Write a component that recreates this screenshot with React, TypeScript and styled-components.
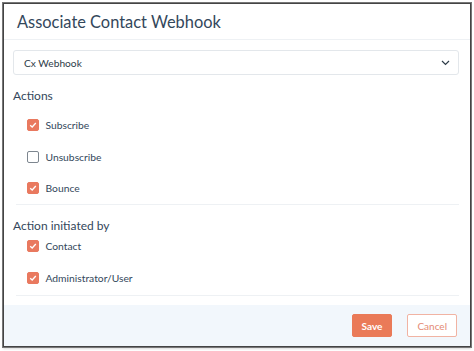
import React from "react";
import styled, { createGlobalStyle } from "styled-components";

const GlobalStyle = createGlobalStyle`
  html, body {
    margin: 0;
    padding: 0;
    background: #ffffff;
    font-family: Lato, "Open Sans", sans-serif;
  }
`;

const Page = styled.div`
  width: 474px;
  height: 351px;
  padding: 3px 3px 4px 3px;
  box-sizing: border-box;
`;

const Modal = styled.div`
  height: 100%;
  display: flex;
  flex-direction: column;
  border: 1px solid #444;
  outline: 0.5px solid #777;
  box-sizing: border-box;
  background: #ffffff;
  box-shadow: 0 2px 2px rgba(0, 0, 0, 0.15);
`;

const Header = styled.div`
  height: 36px;
  box-sizing: border-box;
  flex-shrink: 0;
  display: flex;
  align-items: center;
  padding: 0 13px 1px;
  border-bottom: 1px solid #eef1f4;
`;

const Title = styled.h2`
  margin: 0;
  font-size: 16.4px;
  font-weight: 400;
  color: #33475b;
`;

const Body = styled.div`
  flex: 1;
  padding: 10px 11px 0 9px;
  display: flex;
  flex-direction: column;
`;

const Select = styled.div`
  height: 25px;
  box-sizing: border-box;
  border: 1px solid #e3e7eb;
  border-radius: 3px;
  display: flex;
  align-items: center;
  justify-content: space-between;
  padding: 0 8px 0 10px;
  font-size: 10.2px;
  color: #2d3b48;
`;

const SectionTitle = styled.div`
  font-size: 12px;
  line-height: 16px;
  color: #33475b;
  margin-top: 13px;
`;

const Group = styled.div<{ $top: number; $bottom: number }>`
  display: flex;
  flex-direction: column;
  gap: 19.5px;
  padding: ${({ $top, $bottom }) => `${$top}px 0 ${$bottom}px 10.5px`};
  margin-left: 3px;
  border-bottom: 1px solid #eef1f4;
`;

const Row = styled.label`
  display: flex;
  align-items: center;
  gap: 7px;
  font-size: 10.3px;
  color: #33475b;
  height: 12px;
`;

const Box = styled.span<{ $checked: boolean }>`
  width: 12px;
  height: 12px;
  box-sizing: border-box;
  border-radius: 2px;
  display: flex;
  align-items: center;
  justify-content: center;
  background: ${({ $checked }) => ($checked ? "#e9795f" : "#ffffff")};
  border: 1px solid ${({ $checked }) => ($checked ? "#e9795f" : "#7d868f")};
`;

const Footer = styled.div`
  height: 41px;
  flex-shrink: 0;
  background: #f2f7fc;
  display: flex;
  align-items: center;
  justify-content: flex-end;
  gap: 15px;
  padding: 0 13px 0 0;
`;

const Button = styled.button<{ $primary?: boolean }>`
  height: 23px;
  padding: 0 9px;
  border-radius: 2px;
  font-family: inherit;
  font-size: 10px;
  font-weight: ${({ $primary }) => ($primary ? 700 : 400)};
  background: ${({ $primary }) => ($primary ? "#ea7a58" : "#ffffff")};
  color: ${({ $primary }) => ($primary ? "#ffffff" : "#e48a74")};
  border: 1px solid ${({ $primary }) => ($primary ? "#ea7a58" : "#f1b3a3")};
`;

const Check = () => (
  <svg width="8" height="8" viewBox="0 0 8 8">
    <path d="M1.2 4.2 L3.2 6 L6.8 2" fill="none" stroke="#fff" strokeWidth="1.3" />
  </svg>
);

const Checkbox = ({ label, checked }: { label: string; checked: boolean }) => (
  <Row>
    <Box $checked={checked}>{checked && <Check />}</Box>
    {label}
  </Row>
);

export default function App() {
  return (
    <>
      <GlobalStyle />
      <Page>
        <Modal>
          <Header>
            <Title>Associate Contact Webhook</Title>
          </Header>
          <Body>
            <Select>
              <span>Cx Webhook</span>
              <svg width="9" height="6" viewBox="0 0 9 6">
                <path d="M1 1 L4.5 4.5 L8 1" fill="none" stroke="#2d3b48" strokeWidth="1.2" />
              </svg>
            </Select>
            <SectionTitle>Actions</SectionTitle>
            <Group $top={15} $bottom={10}>
              <Checkbox label="Subscribe" checked />
              <Checkbox label="Unsubscribe" checked={false} />
              <Checkbox label="Bounce" checked />
            </Group>
            <SectionTitle>Action initiated by</SectionTitle>
            <Group $top={6} $bottom={11}>
              <Checkbox label="Contact" checked />
              <Checkbox label="Administrator/User" checked />
            </Group>
          </Body>
          <Footer>
            <Button $primary>Save</Button>
            <Button>Cancel</Button>
          </Footer>
        </Modal>
      </Page>
    </>
  );
}
